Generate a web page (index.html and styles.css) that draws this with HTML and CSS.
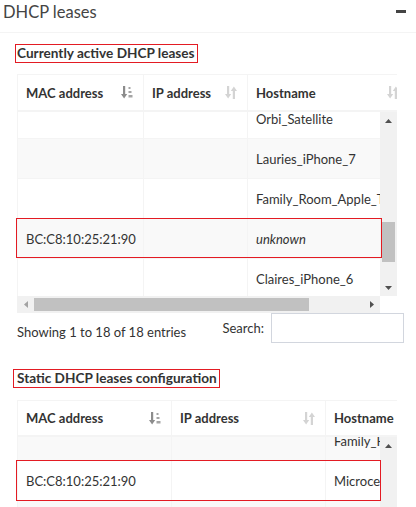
FILE: index.html
```html
<!DOCTYPE html>
<html>
<head>
<meta charset="utf-8">
<title>DHCP leases</title>
<link rel="stylesheet" href="styles.css">
</head>
<body>
<div class="box">
  <div class="box-header">
    <h3 class="box-title">DHCP leases</h3>
    <span class="minus"></span>
  </div>
  <div class="box-body">
    <h4 class="sec-title sec1"><span>Currently active DHCP leases</span></h4>

    <div class="dt dt1">
      <div class="thead">
        <div class="hrow">
          <div class="th">MAC address
            <svg class="sort" width="12" height="13" viewBox="0 0 12 13"><path d="M2 0h2.2v8h2l-3.1 4.5L0 8h2z" fill="#8c8c8c"/><rect x="7.5" y="1" width="2" height="2" fill="#a5a5a5"/><rect x="7.5" y="5" width="3" height="2" fill="#a5a5a5"/><rect x="7.5" y="9" width="4" height="2.5" fill="#a5a5a5"/></svg>
          </div>
          <div class="th">IP address
            <svg class="sort" width="12" height="13" viewBox="0 0 12 13"><path d="M2 0h2.2v8h2l-3.1 4.5L0 8h2z" fill="#d4d4d4"/><path d="M7.8 13H10V5h2L8.9.5 5.8 5h2z" fill="#d4d4d4"/></svg>
          </div>
          <div class="th">Hostname
            <svg class="sort" width="12" height="13" viewBox="0 0 12 13"><path d="M2 0h2.2v8h2l-3.1 4.5L0 8h2z" fill="#d4d4d4"/><path d="M7.8 13H10V5h2L8.9.5 5.8 5h2z" fill="#d4d4d4"/></svg>
          </div>
        </div>
      </div>
      <div class="tbody">
        <div class="vp">
          <div class="rows">
            <div class="tr"><div class="td"></div><div class="td"></div><div class="td">Orbi_Satellite</div></div>
            <div class="tr odd"><div class="td"></div><div class="td"></div><div class="td">Lauries_iPhone_7</div></div>
            <div class="tr"><div class="td"></div><div class="td"></div><div class="td">Family_Room_Apple_TV</div></div>
            <div class="tr odd"><div class="td">BC:C8:10:25:21:90</div><div class="td"></div><div class="td"><em>unknown</em></div></div>
            <div class="tr"><div class="td"></div><div class="td"></div><div class="td">Claires_iPhone_6</div></div>
          </div>
        </div>
        <div class="vscroll">
          <div class="sb-btn"><svg width="7" height="4" viewBox="0 0 7 4"><path d="M0 4L3.5 0 7 4z" fill="#505050"/></svg></div>
          <div class="vthumb"></div>
          <div class="sb-btn sb-end"><svg width="7" height="4" viewBox="0 0 7 4"><path d="M0 0h7L3.5 4z" fill="#505050"/></svg></div>
        </div>
      </div>
      <div class="hscroll">
        <div class="sb-btn"><svg width="4" height="7" viewBox="0 0 4 7"><path d="M4 0v7L0 3.5z" fill="#a3a3a3"/></svg></div>
        <div class="hthumb"></div>
        <div class="sb-btn sb-end"><svg width="4" height="7" viewBox="0 0 4 7"><path d="M0 0v7l4-3.5z" fill="#505050"/></svg></div>
      </div>
      <div class="annot annot1"></div>
    </div>

    <div class="dt-footer">
      <div class="info">Showing 1 to 18 of 18 entries</div>
      <label class="search">Search:<input type="search"></label>
    </div>

    <h4 class="sec-title sec2"><span>Static DHCP leases configuration</span></h4>

    <div class="dt dt2">
      <div class="thead">
        <div class="hrow">
          <div class="th">MAC address
            <svg class="sort" width="12" height="13" viewBox="0 0 12 13"><path d="M2 0h2.2v8h2l-3.1 4.5L0 8h2z" fill="#8c8c8c"/><rect x="7.5" y="1" width="2" height="2" fill="#a5a5a5"/><rect x="7.5" y="5" width="3" height="2" fill="#a5a5a5"/><rect x="7.5" y="9" width="4" height="2.5" fill="#a5a5a5"/></svg>
          </div>
          <div class="th">IP address
            <svg class="sort" width="12" height="13" viewBox="0 0 12 13"><path d="M2 0h2.2v8h2l-3.1 4.5L0 8h2z" fill="#d4d4d4"/><path d="M7.8 13H10V5h2L8.9.5 5.8 5h2z" fill="#d4d4d4"/></svg>
          </div>
          <div class="th">Hostname
            <svg class="sort" width="12" height="13" viewBox="0 0 12 13"><path d="M2 0h2.2v8h2l-3.1 4.5L0 8h2z" fill="#d4d4d4"/><path d="M7.8 13H10V5h2L8.9.5 5.8 5h2z" fill="#d4d4d4"/></svg>
          </div>
        </div>
      </div>
      <div class="tbody">
        <div class="vp">
          <div class="rows">
            <div class="tr odd"><div class="td"></div><div class="td"></div><div class="td">Family_Room_Apple_TV</div></div>
            <div class="tr"><div class="td">BC:C8:10:25:21:90</div><div class="td"></div><div class="td">Microcenter</div></div>
            <div class="tr odd"><div class="td"></div><div class="td"></div><div class="td"></div></div>
          </div>
        </div>
        <div class="vscroll">
          <div class="sb-btn"><svg width="7" height="4" viewBox="0 0 7 4"><path d="M0 4L3.5 0 7 4z" fill="#505050"/></svg></div>
        </div>
      </div>
      <div class="annot annot2"></div>
    </div>
  </div>
</div>
</body>
</html>
```

FILE: styles.css
```css
html, body {
  margin: 0;
  padding: 0;
  overflow: hidden;
  background: #fff;
}

body {
  font-family: Lato, "Liberation Sans", Arial, sans-serif;
  font-size: 13px;
  color: #333;
}

* {
  box-sizing: border-box;
}

.box-header {
  display: flex;
  justify-content: space-between;
  align-items: flex-start;
  height: 33px;
  border-bottom: 1px solid #f4f4f4;
  padding: 0 10px 0 3px;
}

.box-title {
  margin: 0;
  font-size: 16.5px;
  font-weight: 400;
  line-height: 24px;
  color: #444;
}

.minus {
  width: 10px;
  height: 3px;
  margin-top: 10px;
  background: #444;
}

.box-body {
  padding: 0 12px 0 17px;
}

.sec-title {
  margin: 0;
  font-size: 13.6px;
  font-weight: 700;
  line-height: 17px;
  color: #333;
}

.sec-title span {
  display: inline-block;
  border: 1px solid #e31b23;
}

.sec1 {
  margin-top: 11px;
}

.sec1 span {
  margin-left: -2px;
  padding: 0 2px 0 1px;
}

.sec2 {
  margin-top: 26px;
}

.sec2 span {
  margin-left: -4px;
  padding: 0 2px 0 3px;
}

.dt {
  position: relative;
  width: 380px;
}

.dt1 {
  margin-top: 11px;
}

.dt2 {
  margin-top: 12px;
}

.thead {
  overflow: hidden;
  border-top: 1px solid #f4f4f4;
  border-bottom: 2px solid #f4f4f4;
}

.hrow {
  display: grid;
  width: max-content;
}

.dt1 .hrow {
  grid-template-columns: 126px 104px 162px;
}

.dt2 .hrow {
  grid-template-columns: 154px 154px 200px;
}

.th {
  display: flex;
  align-items: center;
  justify-content: space-between;
  height: 35px;
  padding: 0 10px 0 8px;
  border-left: 1px solid #f4f4f4;
  font-weight: 700;
  white-space: nowrap;
}

.dt2 .th {
  height: 34px;
}

.sort {
  flex: none;
}

.tbody {
  display: flex;
}

.vp {
  width: 363px;
  overflow: hidden;
}

.dt1 .vp {
  height: 184px;
}

.dt2 .vp {
  height: 70px;
}

.rows {
  width: max-content;
}

.dt1 .rows {
  margin-top: -14px;
}

.dt2 .rows {
  margin-top: -17px;
}

.tr {
  display: grid;
  height: 40px;
  border-top: 1px solid #f4f4f4;
}

.dt1 .tr {
  grid-template-columns: 126px 104px 206px;
}

.dt2 .tr {
  grid-template-columns: 154px 154px 200px;
}

.tr.odd {
  background: #f9f9f9;
}

.td {
  display: flex;
  align-items: center;
  padding: 0 8px;
  border-left: 1px solid #f4f4f4;
  white-space: nowrap;
  overflow: hidden;
}

.vscroll {
  width: 17px;
  background: #f1f1f1;
  display: flex;
  flex-direction: column;
  align-items: center;
}

.sb-btn {
  width: 17px;
  height: 17px;
  flex: none;
  display: flex;
  align-items: center;
  justify-content: center;
}

.sb-end {
  margin-top: auto;
}

.vthumb {
  width: 13px;
  height: 40px;
  margin-top: 93px;
  background: #c1c1c1;
}

.hscroll {
  width: 363px;
  height: 17px;
  background: #f1f1f1;
  display: flex;
  align-items: center;
}

.hscroll .sb-end {
  margin-top: 0;
  margin-left: auto;
}

.hthumb {
  width: 275px;
  height: 13px;
  background: #c1c1c1;
}

.annot {
  position: absolute;
  border: 1px solid #e31b23;
  pointer-events: none;
}

.annot1 {
  left: -1px;
  top: 144px;
  width: 366px;
  height: 40px;
}

.annot2 {
  left: -1px;
  top: 60px;
  width: 365px;
  height: 41px;
}

.dt-footer {
  display: flex;
  justify-content: space-between;
  align-items: flex-start;
  width: 387px;
}

.info {
  padding-top: 9px;
  line-height: 20px;
}

.search {
  display: flex;
  align-items: center;
  gap: 7px;
}

.search input {
  width: 133px;
  height: 30px;
  margin: 0;
  border: 1px solid #d2d6de;
  font: inherit;
  outline: none;
}
```
